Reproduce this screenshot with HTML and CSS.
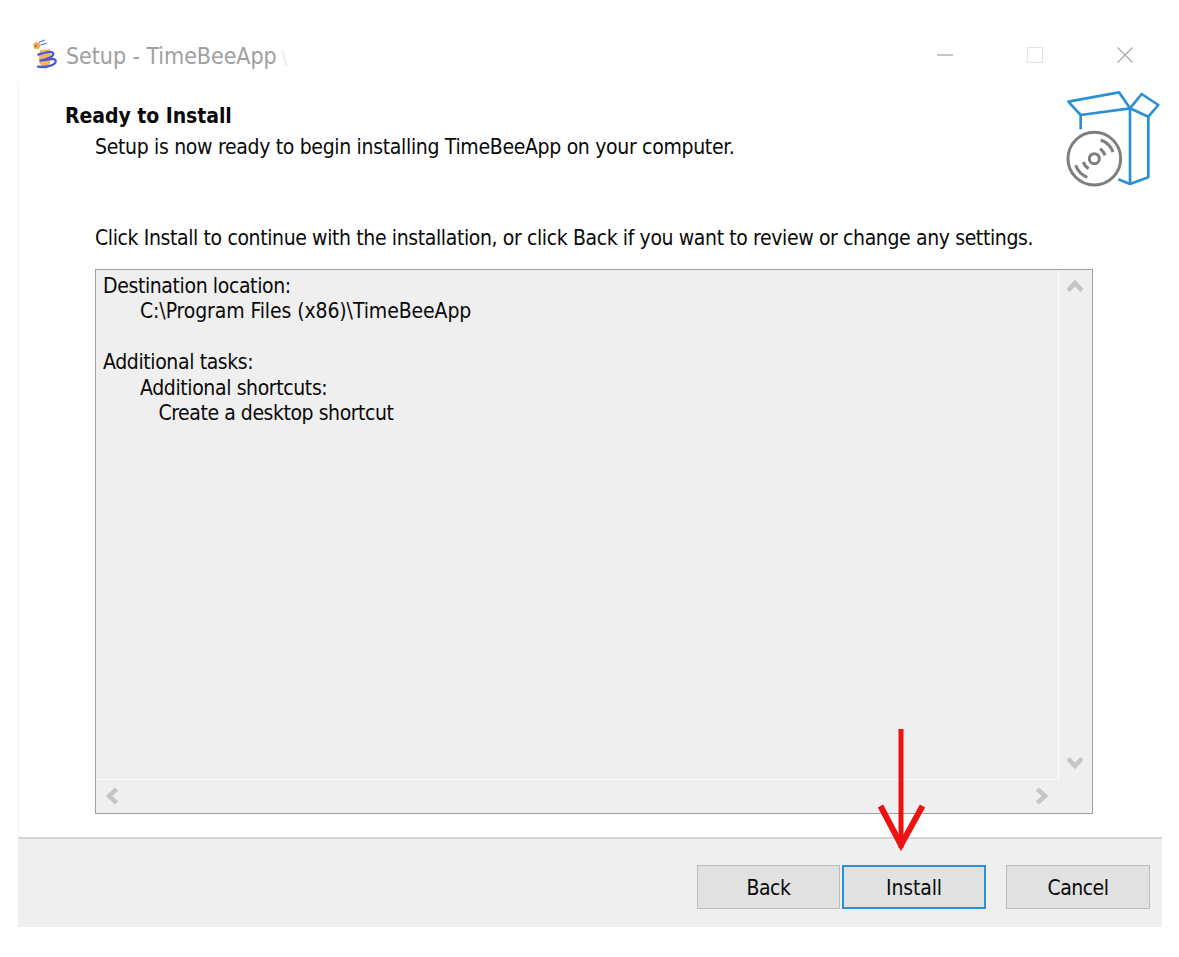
FILE: index.html
```html
<!DOCTYPE html>
<html lang="en">
<head>
<meta charset="utf-8">
<title>Setup - TimeBeeApp</title>
<link rel="stylesheet" href="styles.css">
</head>
<body>
<div class="window">
  <header class="titlebar">
    <svg class="bee" viewBox="39 27 75 90" aria-hidden="true">
      <circle cx="50" cy="47" r="10" fill="#f0a850"/>
      <circle cx="47" cy="48" r="2.2" fill="#4a3526"/>
      <path d="M58 37 L74 30 M62 45 L78 40" stroke="#5a70dc" stroke-width="3.5" fill="none" stroke-linecap="round"/>
      <path d="M60 60 L90 58 Q98 98 80 117 Q60 112 56 90 Z" fill="#f5b55a"/>
      <path d="M55 74 C72 68 98 60 100 72 C101 82 78 88 62 92 C85 88 109 82 107 95 C105 108 72 113 54 110" stroke="#4a5ad8" stroke-width="7" fill="none" stroke-linecap="round" stroke-linejoin="round"/>
    </svg>
    <div class="title">Setup - TimeBeeApp <span class="title-fade">\</span></div>
    <div class="controls">
      <svg class="ctl" viewBox="0 0 16 16" aria-hidden="true"><path d="M0 8 H16" stroke="#a0a0a0" stroke-width="1.2"/></svg>
      <svg class="ctl" viewBox="0 0 16 16" aria-hidden="true"><rect x=".5" y=".5" width="15" height="15" fill="none" stroke="#e3e3e3" stroke-width="1.2"/></svg>
      <svg class="ctl" viewBox="0 0 16 16" aria-hidden="true"><path d="M.5 .5 L15.5 15.5 M15.5 .5 L.5 15.5" stroke="#a8a8a8" stroke-width="1.2"/></svg>
    </div>
  </header>

  <main class="body">
    <div class="head">
      <div class="head-text">
        <h1 class="heading">Ready to Install</h1>
        <p class="sub">Setup is now ready to begin installing TimeBeeApp on your computer.</p>
      </div>
      <svg class="boxicon" viewBox="0 0 360 345" aria-hidden="true">
        <g fill="none" stroke="#2b90d6" stroke-width="8" stroke-linejoin="round">
          <path d="M55 65 L207 37 L240 85 L92 105 Z"/>
          <path d="M92 105 V148"/>
          <path d="M240 85 V312"/>
          <path d="M240 85 L275 42 L325 75 L295 110 Z"/>
          <path d="M295 110 V292 L240 312 L205 298"/>
        </g>
        <g fill="none" stroke="#7e7e7e" stroke-width="9">
          <circle cx="133" cy="236" r="79"/>
          <circle cx="133" cy="236" r="15"/>
          <path d="M150 206 A35 35 0 0 1 165 226 M152 180 A60 60 0 0 1 189 216"/>
          <path d="M116 266 A35 35 0 0 1 100 246 M112 292 A60 60 0 0 1 77 256"/>
        </g>
      </svg>
    </div>
    <p class="intro">Click Install to continue with the installation, or click Back if you want to review or change any settings.</p>
    <div class="memo">
      <div class="memo-top">
        <div class="memo-text">
          <div>Destination location:</div>
          <div class="i1 path">C:\Program Files (x86)\TimeBeeApp</div>
          <div class="blank"></div>
          <div>Additional tasks:</div>
          <div class="i1">Additional shortcuts:</div>
          <div class="i2">Create a desktop shortcut</div>
        </div>
        <div class="vscroll">
          <svg class="chev" viewBox="0 0 16 12" aria-hidden="true"><path d="M1 10.5 L8 3 L15 10.5" fill="none" stroke="#c6c6c6" stroke-width="4.6"/></svg>
          <svg class="chev" viewBox="0 0 16 12" aria-hidden="true"><path d="M1 1.5 L8 9 L15 1.5" fill="none" stroke="#c6c6c6" stroke-width="4.6"/></svg>
        </div>
      </div>
      <div class="hscroll">
        <svg class="chevh" viewBox="0 0 12 16" aria-hidden="true"><path d="M10.5 1 L3 8 L10.5 15" fill="none" stroke="#c6c6c6" stroke-width="4.6"/></svg>
        <svg class="chevh" viewBox="0 0 12 16" aria-hidden="true"><path d="M1.5 1 L9 8 L1.5 15" fill="none" stroke="#c6c6c6" stroke-width="4.6"/></svg>
      </div>
    </div>
  </main>

  <footer class="footer">
    <button class="btn btn-back">Back</button>
    <button class="btn btn-primary">Install</button>
    <button class="btn btn-cancel">Cancel</button>
  </footer>
</div>
<svg class="arrow" viewBox="0 0 60 130" aria-hidden="true">
  <path d="M30 1 V120" stroke="#ee1111" stroke-width="5" fill="none"/>
  <path d="M9.5 78 L30 117 L51.5 78" stroke="#ee1111" stroke-width="6" fill="none"/>
</svg>
</body>
</html>
```

FILE: styles.css
```css
* { box-sizing: border-box; }
html, body { margin: 0; padding: 0; background: #fff; }
body {
  width: 1179px;
  height: 957px;
  overflow: hidden;
  position: relative;
  font-family: "DejaVu Sans", "Liberation Sans", sans-serif;
  font-stretch: condensed;
  font-size: 21px;
  letter-spacing: -0.38px;
  color: #0a0a0a;
}
.window { width: 1144px; margin-left: 18px; padding-top: 39px; }
.titlebar { display: flex; align-items: flex-start; height: 43px; padding-left: 15px; }
.bee { width: 25px; height: 30px; flex: none; }
.title { margin-left: 8px; font-size: 23px; line-height: 35px; letter-spacing: -0.05px; color: #a0a0a0; }
.title-fade { color: #ececec; font-size: 20px; margin-left: -2px; }
.controls { margin-left: auto; display: flex; gap: 74px; padding: 8px 29px 0 0; }
.ctl { width: 16px; height: 16px; display: block; }
.body { height: 755px; border-left: 1px solid #f3f3f3; padding-left: 46px; display: flex; flex-direction: column; }
.head { display: flex; height: 108px; }
.head-text { flex: 1; padding-top: 20px; }
.heading { margin: 0; font-size: 21px; line-height: 28px; font-weight: 700; letter-spacing: -0.05px; }
.sub { margin: 3px 0 0 30px; line-height: 28px; letter-spacing: -0.32px; }
.boxicon { width: 120px; height: 115px; flex: none; margin: -2px -8px 0 0; }
.intro { margin: 34px 0 0 30px; line-height: 28px; }
.memo { margin: 17px 0 0 30px; width: 998px; height: 545px; border: 1px solid #a0a0a0; background: #efefef; display: flex; flex-direction: column; }
.memo-top { height: 510px; display: flex; }
.memo-text { width: 963px; border-right: 1px solid #fdfdfd; border-bottom: 1px solid #fdfdfd; padding: 4px 0 0 7px; line-height: 25.4px; }
.blank { height: 25.4px; }
.i1 { padding-left: 37px; }
.i2 { padding-left: 55.5px; letter-spacing: -0.44px; }
.path { letter-spacing: -0.1px; }
.vscroll { flex: 1; display: flex; flex-direction: column; justify-content: space-between; align-items: center; padding: 10px 1px 11px 0; }
.chev { width: 16px; height: 12px; display: block; }
.hscroll { flex: 1; display: flex; justify-content: space-between; align-items: center; padding: 0 44px 2px 10px; }
.chevh { width: 12px; height: 16px; display: block; }
.footer { height: 90px; background: #efefef; border-top: 2px solid #d2d2d2; display: flex; align-items: flex-start; padding: 26px 0 0 679px; }
.btn { width: 143px; height: 44px; background: #e1e1e1; border: 1px solid #bcbcbc; font: inherit; letter-spacing: -0.5px; color: #0a0a0a; padding: 2px 0 0; }
.btn-primary { width: 144px; margin-left: 2px; border: 2px solid #2b90d9; letter-spacing: -0.15px; }
.btn-cancel { width: 144px; margin-left: 20px; }
.arrow { position: absolute; left: 871px; top: 728px; width: 60px; height: 130px; }
```
